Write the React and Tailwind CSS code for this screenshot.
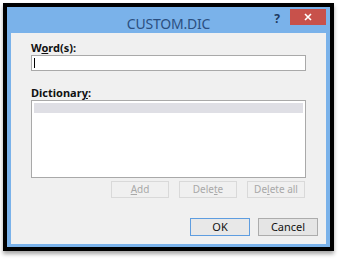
export default function App() {
  const font = { fontFamily: '"Noto Sans", "Open Sans", "Liberation Sans", sans-serif' };

  return (
    <div className="w-[343px] h-[260px] bg-white pt-[3px] pl-[3px]" style={font}>
      {/* Black frame */}
      <div className="w-[331px] h-[248px] bg-black p-[4px] shadow-[0_3px_4px_rgba(0,0,0,0.35)]">
        {/* Window */}
        <div className="h-full bg-[#7ab2ea] flex flex-col px-[4px] pb-[3px]">
          {/* Title bar */}
          <div className="h-[26px] flex items-start">
            <div className="w-[70px]" />
            <div className="flex-1 text-center text-[14px] leading-none pt-[10px] text-[#2b4f80] tracking-[-0.2px]">
              CUSTOM.DIC
            </div>
            <div className="w-[70px] flex items-start justify-end">
              <span className="text-[12px] font-bold leading-none text-[#1e3a5f] mt-[6px] mr-[10px]">?</span>
              <div className="w-[36px] h-[16px] mt-[2px] bg-[#c8514b] flex items-center justify-center">
                <svg width="8" height="8" viewBox="0 0 8 8">
                  <path d="M1 1L7 7M7 1L1 7" stroke="#fff" strokeWidth="1.6" />
                </svg>
              </div>
            </div>
          </div>

          {/* Content */}
          <div className="flex-1 bg-[#f0f0f0] flex flex-col text-[11px] text-[#111]">
            <div className="px-[20px] pt-[8px] flex flex-col">
              <label className="font-bold leading-[13px]">
                W<u>o</u>rd(s):
              </label>
              <div className="mt-[1px] h-[16px] bg-white border border-[#a9a9a9] flex items-center pl-[2px]">
                <div className="w-px h-[10px] bg-black" />
              </div>

              <label className="font-bold leading-[13px] mt-[15px]">
                Dictionar<u>y</u>:
              </label>
              <div className="mt-[1px] h-[78px] bg-white border border-[#a9a9a9] p-[2px]">
                <div className="h-[10px] bg-[#dfdfe5]" />
              </div>

              <div className="flex justify-end gap-[10px] mt-[3px] pr-[1px]">
                {[
                  <><u>A</u>dd</>,
                  <>Dele<u>t</u>e</>,
                  <>De<u>l</u>ete all</>,
                ].map((label, i) => (
                  <div
                    key={i}
                    className="w-[58px] h-[17px] border border-[#d9d9d9] bg-[#f0f0f0] text-[#a8a8a8] text-[10px] flex items-center justify-center"
                  >
                    <span>{label}</span>
                  </div>
                ))}
              </div>
            </div>

            <div className="flex justify-end gap-[8px] pr-[8px] mt-[20px]">
              <div className="w-[60px] h-[18px] border border-[#5e9de0] bg-[#e8e8e8] text-[11px] flex items-center justify-center">
                OK
              </div>
              <div className="w-[60px] h-[18px] border border-[#acacac] bg-[#e5e5e5] text-[11px] flex items-center justify-center">
                Cancel
              </div>
            </div>
          </div>
        </div>
      </div>
    </div>
  );
}
